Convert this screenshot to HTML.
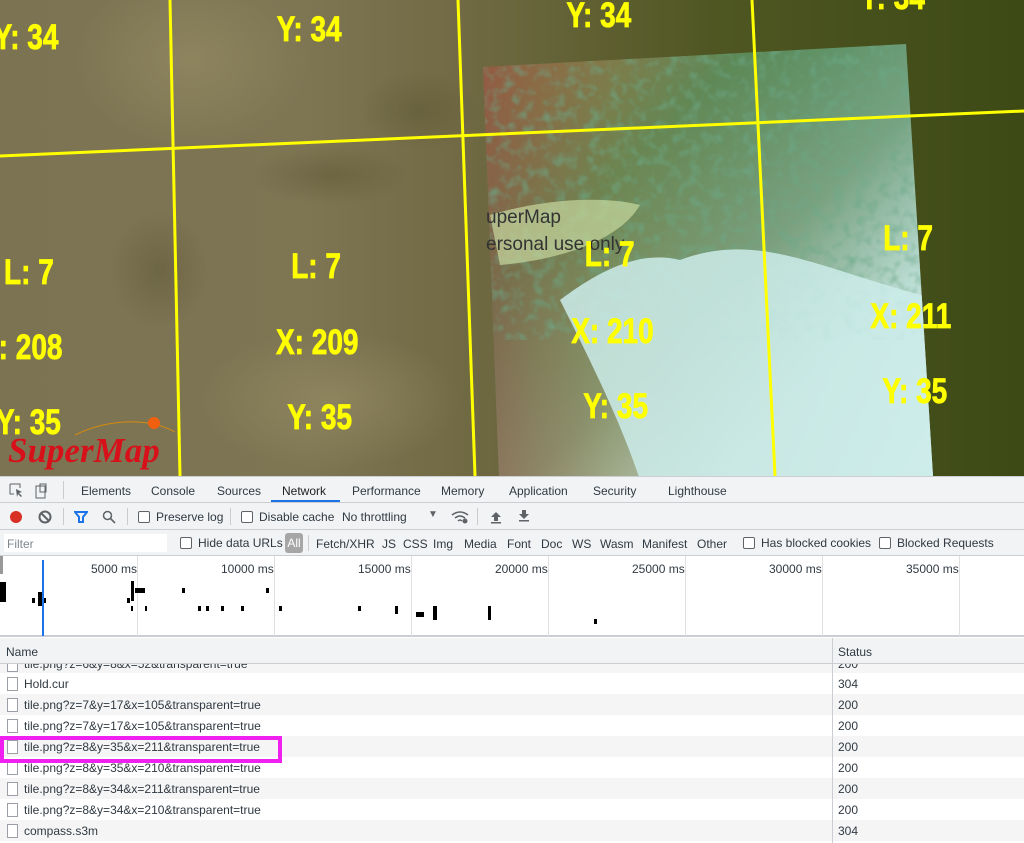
<!DOCTYPE html>
<html><head><meta charset="utf-8"><style>
*{margin:0;padding:0;box-sizing:border-box}
body{width:1024px;height:843px;overflow:hidden;background:#fff;font-family:"Liberation Sans",sans-serif;position:relative}
.dt{position:absolute;left:0;width:1024px;font-size:12px;color:#303942}
.abs{position:absolute;white-space:nowrap}
.cb{display:inline-block;width:12px;height:12px;border:1px solid #5f6368;border-radius:2px;vertical-align:-2px;margin-right:6px;background:#fff}
.row{position:absolute;left:0;width:1024px;height:21px;font-size:12px;color:#303942}
.row .n{position:absolute;left:24px;top:4px}
.row .s{position:absolute;left:838px;top:4px}
.row .ic{position:absolute;left:7px;top:4px;width:11px;height:14px;border:1px solid #9aa0a6;background:#fff}
</style></head><body>
<svg width="1024" height="476" style="position:absolute;left:0;top:0" xmlns="http://www.w3.org/2000/svg">
<defs>
<linearGradient id="bg" x1="0" y1="0" x2="1" y2="0">
<stop offset="0" stop-color="#7b7352"/><stop offset="0.3" stop-color="#7e7553"/><stop offset="0.45" stop-color="#716a44"/><stop offset="0.7" stop-color="#4f5622"/><stop offset="1" stop-color="#3d4a16"/></linearGradient>
<radialGradient id="l1" cx="0.5" cy="0.5" r="0.5"><stop offset="0" stop-color="#958c64" stop-opacity="0.7"/><stop offset="1" stop-color="#958c64" stop-opacity="0"/></radialGradient>
<radialGradient id="d1" cx="0.5" cy="0.5" r="0.5"><stop offset="0" stop-color="#5a5430" stop-opacity="0.45"/><stop offset="1" stop-color="#5a5430" stop-opacity="0"/></radialGradient>
<linearGradient id="ter" x1="0" y1="0" x2="1" y2="1">
<stop offset="0" stop-color="#8a6a44"/><stop offset="0.3" stop-color="#4f8a58"/><stop offset="0.55" stop-color="#78a484"/><stop offset="0.75" stop-color="#bfe0d8"/><stop offset="1" stop-color="#d3f0ee"/></linearGradient>
<linearGradient id="ter2" x1="0" y1="0" x2="1" y2="0">
<stop offset="0" stop-color="#a04a40" stop-opacity="0.55"/><stop offset="0.3" stop-color="#b07a40" stop-opacity="0.3"/><stop offset="1" stop-color="#6f9a7a" stop-opacity="0"/></linearGradient>
<filter id="nz" x="0" y="0" width="100%" height="100%"><feTurbulence type="fractalNoise" baseFrequency="0.09" numOctaves="2" seed="3"/><feColorMatrix values="0 0 0 0 0.15 0 0 0 0 0.4 0 0 0 0 0.25 0 0 0 2.2 -1"/></filter>
<clipPath id="tc"><polygon points="483,67 906,44 933,476 499,476"/></clipPath>
</defs>
<rect width="1024" height="476" fill="url(#bg)"/>
<ellipse cx="190" cy="60" rx="120" ry="90" fill="url(#l1)"/>
<ellipse cx="330" cy="400" rx="130" ry="70" fill="url(#l1)"/>
<ellipse cx="160" cy="270" rx="50" ry="60" fill="url(#d1)"/>
<ellipse cx="330" cy="175" rx="80" ry="30" fill="url(#d1)"/>
<ellipse cx="420" cy="110" rx="60" ry="40" fill="url(#d1)"/>
<g clip-path="url(#tc)">
<rect x="480" y="40" width="460" height="440" fill="url(#ter)"/>
<rect x="480" y="40" width="460" height="440" fill="url(#ter2)"/>
<rect x="480" y="40" width="460" height="300" filter="url(#nz)" opacity="0.7"/>
<path d="M560,300 C600,270 640,250 680,260 C760,230 820,270 940,300 L940,480 L640,480 C620,420 590,360 560,300Z" fill="#cdecea" opacity="0.85"/>
<path d="M490,215 C540,200 600,195 640,205 C620,240 560,260 500,265Z" fill="#c8d8a0" opacity="0.7"/>
</g>
<text x="486" y="223" font-family="Liberation Sans,sans-serif" font-size="19" fill="#333">uperMap</text>
<text x="486" y="250" font-family="Liberation Sans,sans-serif" font-size="19" fill="#333">ersonal use only</text>
<g stroke="#ffff00" stroke-width="3" fill="none">
<line x1="0" y1="156" x2="1024" y2="111"/>
<line x1="170" y1="0" x2="180" y2="476"/>
<line x1="458" y1="0" x2="475" y2="476"/>
<line x1="752" y1="0" x2="775" y2="476"/>
</g>
<g font-family="'Liberation Sans',sans-serif" font-weight="bold" font-size="35" fill="#ffff00" stroke="#ffff00" stroke-width="0.8" transform="scale(0.8 1)">
<text x="-8" y="49">Y: 34</text><text x="346" y="41">Y: 34</text><text x="708" y="27">Y: 34</text><text x="1075" y="9">Y: 34</text>
<text x="5" y="284">L: 7</text><text x="364" y="278">L: 7</text><text x="731" y="266">L: 7</text><text x="1104" y="250">L: 7</text>
<text x="-25" y="359">X: 208</text><text x="345" y="354">X: 209</text><text x="714" y="343">X: 210</text><text x="1088" y="328">X: 211</text>
<text x="-5" y="434">Y: 35</text><text x="359" y="429">Y: 35</text><text x="729" y="418">Y: 35</text><text x="1103" y="403">Y: 35</text>
</g>
<path d="M75,435 C110,418 150,418 175,432" stroke="#d88a10" stroke-width="1" fill="none"/>
<circle cx="154" cy="423" r="6" fill="#f06010"/>
<text x="8" y="462" font-family="'Liberation Serif',serif" font-style="italic" font-weight="bold" font-size="35" fill="#d8101a">SuperMap</text>
</svg>
<div class="dt" style="top:476px;height:27px;background:#f1f3f4;border-top:1px solid #cacdd1;border-bottom:1px solid #cacdd1">
<svg class="abs" style="left:9px;top:6px" width="40" height="16"><path d="M1,1h10v4M1,1v10h4" stroke="#5f6368" fill="none"/><path d="M7,6l6,3-3,1 3,3-1,1-3-3-1,3z" fill="#5f6368"/><rect x="27" y="3" width="9" height="12" stroke="#5f6368" fill="none"/><rect x="31" y="1" width="6" height="8" stroke="#5f6368" fill="none"/></svg>
<div class="abs" style="left:63px;top:4px;width:1px;height:18px;background:#ccc"></div>
<span class="abs" style="left:81px;top:7px">Elements</span>
<span class="abs" style="left:151px;top:7px">Console</span>
<span class="abs" style="left:217px;top:7px">Sources</span>
<span class="abs" style="left:282px;top:7px;color:#202124">Network</span>
<div class="abs" style="left:271px;top:23px;width:69px;height:2px;background:#1a73e8"></div>
<span class="abs" style="left:352px;top:7px">Performance</span>
<span class="abs" style="left:441px;top:7px">Memory</span>
<span class="abs" style="left:509px;top:7px">Application</span>
<span class="abs" style="left:593px;top:7px">Security</span>
<span class="abs" style="left:668px;top:7px">Lighthouse</span>
</div>
<div class="dt" style="top:503px;height:27px;background:#f1f3f4;border-bottom:1px solid #cacdd1">
<div class="abs" style="left:10px;top:8px;width:12px;height:12px;border-radius:50%;background:#d93025"></div>
<svg class="abs" style="left:38px;top:7px" width="14" height="14"><circle cx="7" cy="7" r="5.5" stroke="#5f6368" stroke-width="2" fill="none"/><line x1="3" y1="3" x2="11" y2="11" stroke="#5f6368" stroke-width="2"/></svg>
<div class="abs" style="left:63px;top:5px;width:1px;height:17px;background:#ccc"></div>
<svg class="abs" style="left:74px;top:8px" width="14" height="12"><path d="M1,1h12l-4,5v5h-4v-5z" stroke="#1a73e8" stroke-width="2" fill="none"/></svg>
<svg class="abs" style="left:102px;top:7px" width="14" height="14"><circle cx="5.5" cy="5.5" r="4" stroke="#5f6368" stroke-width="1.5" fill="none"/><line x1="8.5" y1="8.5" x2="13" y2="13" stroke="#5f6368" stroke-width="1.6"/></svg>
<div class="abs" style="left:127px;top:5px;width:1px;height:17px;background:#ccc"></div>
<span class="abs" style="left:138px;top:7px"><span class="cb"></span>Preserve log</span>
<div class="abs" style="left:230px;top:5px;width:1px;height:17px;background:#ccc"></div>
<span class="abs" style="left:241px;top:7px"><span class="cb"></span>Disable cache</span>
<span class="abs" style="left:342px;top:7px">No throttling</span>
<span class="abs" style="left:428px;top:6px;font-size:10px;color:#5f6368">▼</span>
<svg class="abs" style="left:451px;top:7px" width="18" height="14"><path d="M1,5q8-6 16,0M4,8q5-4 10,0M7,11q2-2 4,0" stroke="#5f6368" stroke-width="1.5" fill="none"/><circle cx="14" cy="11" r="2.5" fill="#5f6368"/></svg>
<div class="abs" style="left:477px;top:5px;width:1px;height:17px;background:#ccc"></div>
<svg class="abs" style="left:489px;top:8px" width="14" height="14"><path d="M7,1l5,5h-3v4h-4v-4h-3z" fill="#5f6368"/><rect x="2" y="11" width="10" height="1.5" fill="#5f6368"/></svg>
<svg class="abs" style="left:517px;top:6px" width="14" height="14"><path d="M5,1h4v4h3l-5,5-5-5h3z" fill="#5f6368"/><rect x="2" y="11" width="10" height="1.5" fill="#5f6368"/></svg>
</div>
<div class="dt" style="top:530px;height:26px;background:#f1f3f4;border-bottom:1px solid #cacdd1">
<div class="abs" style="left:4px;top:4px;width:163px;height:18px;background:#fff"></div>
<span class="abs" style="left:7px;top:7px;color:#80868b">Filter</span>
<span class="abs" style="left:180px;top:6px"><span class="cb"></span>Hide data URLs</span>
<div class="abs" style="left:285px;top:3px;width:18px;height:20px;background:#a6a6a6;border-radius:3px;color:#fff;text-align:center;line-height:20px">All</div>
<div class="abs" style="left:308px;top:5px;width:1px;height:16px;background:#ccc"></div>
<span class="abs" style="left:316px;top:7px">Fetch/XHR</span>
<span class="abs" style="left:382px;top:7px">JS</span>
<span class="abs" style="left:403px;top:7px">CSS</span>
<span class="abs" style="left:433px;top:7px">Img</span>
<span class="abs" style="left:464px;top:7px">Media</span>
<span class="abs" style="left:507px;top:7px">Font</span>
<span class="abs" style="left:541px;top:7px">Doc</span>
<span class="abs" style="left:572px;top:7px">WS</span>
<span class="abs" style="left:600px;top:7px">Wasm</span>
<span class="abs" style="left:642px;top:7px">Manifest</span>
<span class="abs" style="left:697px;top:7px">Other</span>
<span class="abs" style="left:743px;top:6px"><span class="cb"></span>Has blocked cookies</span>
<span class="abs" style="left:879px;top:6px"><span class="cb"></span>Blocked Requests</span>
</div>
<div class="dt" style="top:556px;height:81px;background:#fff;border-bottom:2px solid #cacdd1">
<div class="abs" style="left:0;top:0;width:3px;height:18px;background:#999"></div>
<div class="abs" style="left:137px;top:0;width:1px;height:80px;background:#e0e0e0"></div>
<div class="abs" style="left:274px;top:0;width:1px;height:80px;background:#e0e0e0"></div>
<div class="abs" style="left:411px;top:0;width:1px;height:80px;background:#e0e0e0"></div>
<div class="abs" style="left:548px;top:0;width:1px;height:80px;background:#e0e0e0"></div>
<div class="abs" style="left:685px;top:0;width:1px;height:80px;background:#e0e0e0"></div>
<div class="abs" style="left:822px;top:0;width:1px;height:80px;background:#e0e0e0"></div>
<div class="abs" style="left:959px;top:0;width:1px;height:80px;background:#e0e0e0"></div>
<span class="abs" style="left:91px;top:6px">5000 ms</span>
<span class="abs" style="left:221px;top:6px">10000 ms</span>
<span class="abs" style="left:358px;top:6px">15000 ms</span>
<span class="abs" style="left:495px;top:6px">20000 ms</span>
<span class="abs" style="left:632px;top:6px">25000 ms</span>
<span class="abs" style="left:769px;top:6px">30000 ms</span>
<span class="abs" style="left:906px;top:6px">35000 ms</span>
<div class="abs" style="left:42px;top:4px;width:2px;height:76px;background:#1a73e8"></div>
<svg class="abs" style="left:0;top:0" width="700" height="80" fill="#000">
<rect x="0" y="26" width="6" height="20"/><rect x="32" y="42" width="3" height="5"/><rect x="38" y="36" width="4" height="14"/><rect x="44" y="42" width="2" height="5"/>
<rect x="131" y="25" width="3" height="20"/><rect x="135" y="32" width="10" height="5"/><rect x="127" y="42" width="3" height="5"/><rect x="131" y="50" width="2" height="5"/>
<rect x="182" y="32" width="3" height="5"/><rect x="266" y="32" width="3" height="5"/><rect x="145" y="50" width="2" height="5"/><rect x="198" y="50" width="3" height="5"/><rect x="206" y="50" width="3" height="5"/><rect x="221" y="50" width="3" height="5"/><rect x="241" y="50" width="3" height="5"/><rect x="279" y="50" width="3" height="5"/><rect x="358" y="50" width="3" height="5"/><rect x="395" y="50" width="3" height="8"/><rect x="416" y="56" width="8" height="5"/><rect x="433" y="50" width="4" height="14"/><rect x="488" y="50" width="3" height="14"/><rect x="594" y="63" width="3" height="5"/>
</svg>
</div>
<div class="dt" style="top:638px;height:26px;background:#f1f3f4;border-bottom:1px solid #cacdd1">
<span class="abs" style="left:6px;top:7px">Name</span>
<span class="abs" style="left:838px;top:7px">Status</span>
</div>
<div class="row" style="top:664px;height:9px;background:#f5f5f5;overflow:hidden"><div class="ic" style="top:-6px"></div><span class="n" style="top:-7px">tile.png?z=6&amp;y=8&amp;x=52&amp;transparent=true</span><span class="s" style="top:-7px">200</span></div>
<div class="row" style="top:673px;background:#fff"><div class="ic"></div><span class="n">Hold.cur</span><span class="s">304</span></div>
<div class="row" style="top:694px;background:#f5f5f5"><div class="ic"></div><span class="n">tile.png?z=7&amp;y=17&amp;x=105&amp;transparent=true</span><span class="s">200</span></div>
<div class="row" style="top:715px;background:#fff"><div class="ic"></div><span class="n">tile.png?z=7&amp;y=17&amp;x=105&amp;transparent=true</span><span class="s">200</span></div>
<div class="row" style="top:736px;background:#f5f5f5"><div class="ic"></div><span class="n">tile.png?z=8&amp;y=35&amp;x=211&amp;transparent=true</span><span class="s">200</span></div>
<div class="row" style="top:757px;background:#fff"><div class="ic"></div><span class="n">tile.png?z=8&amp;y=35&amp;x=210&amp;transparent=true</span><span class="s">200</span></div>
<div class="row" style="top:778px;background:#f5f5f5"><div class="ic"></div><span class="n">tile.png?z=8&amp;y=34&amp;x=211&amp;transparent=true</span><span class="s">200</span></div>
<div class="row" style="top:799px;background:#fff"><div class="ic"></div><span class="n">tile.png?z=8&amp;y=34&amp;x=210&amp;transparent=true</span><span class="s">200</span></div>
<div class="row" style="top:820px;background:#f5f5f5"><div class="ic"></div><span class="n">compass.s3m</span><span class="s">304</span></div>
<div class="abs" style="left:832px;top:638px;width:1px;height:205px;background:#cacdd1"></div>
<div class="abs" style="left:0;top:736px;width:282px;height:27px;border:4px solid #f020f0"></div>
</body></html>
